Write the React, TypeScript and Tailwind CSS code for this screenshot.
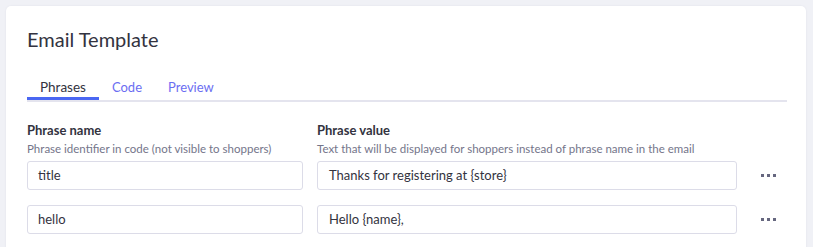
const rows = [
  { name: 'title', value: 'Thanks for registering at {store}' },
  { name: 'hello', value: 'Hello {name},' },
];

const tabs = ['Phrases', 'Code', 'Preview'];

const Dots = () => (
  <div className="flex gap-[3px]">
    <span className="w-[3px] h-[3px] bg-[#66677f]" />
    <span className="w-[3px] h-[3px] bg-[#66677f]" />
    <span className="w-[3px] h-[3px] bg-[#66677f]" />
  </div>
);

const App = () => {
  return (
    <div
      className="w-[813px] h-[247px] overflow-hidden bg-[#f0f1f6] pt-[6px] pl-[6px] pr-[7px]"
      style={{ fontFamily: 'Lato, "Open Sans", sans-serif' }}
    >
      <div className="bg-white rounded-[5px] h-[260px] shadow-[0_0_2px_rgba(40,40,80,0.08)] px-[21px] pt-[19px]">
        <h1 className="text-[20px] leading-[28px] text-[#333340] font-normal">Email Template</h1>

        <div className="mt-[18px] w-[760px] flex border-b-2 border-[#e4e4ee] mb-[19px]">
          {tabs.map((t, i) => (
            <div
              key={t}
              className={
                i === 0
                  ? 'px-[13px] pt-[6px] h-[29px] leading-[20px] text-[13.5px] text-[#333340] border-b-[3px] border-[#4a67f2]'
                  : 'px-[13px] pt-[6px] h-[29px] leading-[20px] text-[13px] text-[#6b6ef2]'
              }
            >
              {t}
            </div>
          ))}
        </div>

        <div className="grid grid-cols-[276px_420px_34px] gap-x-[14px]">
          <div className="text-[13px] font-bold text-[#333340] leading-[18px]">Phrase name</div>
          <div className="text-[13px] font-bold text-[#333340] leading-[18px]">Phrase value</div>
          <div />
          <div className="text-[11.5px] text-[#74758a] leading-[16px] mt-[2px]">
            Phrase identifier in code (not visible to shoppers)
          </div>
          <div className="text-[11.5px] text-[#74758a] leading-[16px] mt-[2px]">
            Text that will be displayed for shoppers instead of phrase name in the email
          </div>
          <div />
          {rows.map((r, i) => (
            <div key={r.name} className="contents">
              <div className={i === 0 ? 'mt-[4px]' : 'mt-[15px]'}>
                <div className="h-[29px] border border-[#dcdce8] rounded-[3px] px-[10px] flex items-center text-[13px] text-[#333340]">
                  {r.name}
                </div>
              </div>
              <div className={i === 0 ? 'mt-[4px]' : 'mt-[15px]'}>
                <div className="h-[29px] border border-[#dcdce8] rounded-[3px] px-[11px] flex items-center text-[13px] text-[#333340]">
                  {r.value}
                </div>
              </div>
              <div className={(i === 0 ? 'mt-[4px]' : 'mt-[15px]') + ' h-[29px] flex items-center justify-center'}>
                <Dots />
              </div>
            </div>
          ))}
        </div>
      </div>
    </div>
  );
};

export default App;
